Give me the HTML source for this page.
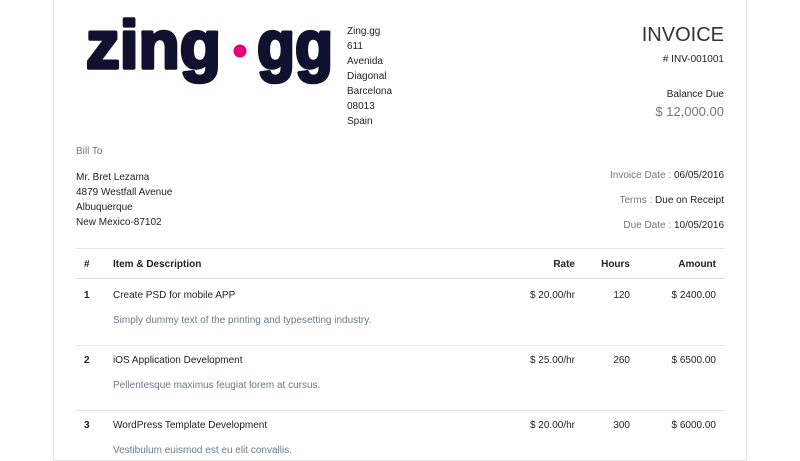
<!DOCTYPE html>
<html><head><style>
body{margin:0;width:800px;height:450px;overflow:hidden;background:#fff;font-family:"Liberation Sans",sans-serif;color:#222;font-size:10px}
.box{position:absolute;left:53px;top:0;width:692px;height:460px;border:1px solid #e3e3e3;border-top:none}
.a{position:absolute;white-space:nowrap}
.g{color:#777}
.r{text-align:right}
.hr{position:absolute;left:76px;width:649px;height:1px;background:#e6e6e6}
b{font-weight:bold}
</style></head><body>
<div class="box"></div>
<svg class="a" style="left:0;top:0" width="345" height="100">
<g font-family="Liberation Sans" font-weight="bold" font-size="68" fill="#10112e" stroke="#10112e" stroke-width="3.5" stroke-linejoin="round">
<text x="86" y="68" textLength="135" lengthAdjust="spacingAndGlyphs">zing</text>
<text x="257" y="68" textLength="76" lengthAdjust="spacingAndGlyphs">gg</text>
</g>
<circle cx="240" cy="51" r="6.5" fill="#e6007e"/>
</svg>
<div class="a" style="left:347px;top:24px;line-height:15px;font-size:10px">Zing.gg<br>611<br>Avenida<br>Diagonal<br>Barcelona<br>08013<br>Spain</div>
<div class="a r" style="right:76px;top:24px;font-size:20px;color:#333">INVOICE</div>
<div class="a r" style="right:76px;top:54px">#&nbsp;INV-001001</div>
<div class="a r" style="right:76px;top:89px">Balance Due</div>
<div class="a r g" style="right:76px;top:104px;font-size:13px">$ 12,000.00</div>
<div class="a g" style="left:76px;top:146px">Bill To</div>
<div class="a" style="left:76px;top:170px;line-height:15px">Mr. Bret Lezama<br>4879 Westfall Avenue<br>Albuquerque<br>New Mexico-87102</div>
<div class="a r" style="right:76px;top:170px"><span class="g">Invoice Date :</span> 06/05/2016</div>
<div class="a r" style="right:76px;top:195px"><span class="g">Terms :</span> Due on Receipt</div>
<div class="a r" style="right:76px;top:220px"><span class="g">Due Date :</span> 10/05/2016</div>
<div class="hr" style="top:248px"></div>
<div class="hr" style="top:278px;background:#ddd"></div>
<div class="a" style="left:84px;top:259px"><b>#</b></div>
<div class="a" style="left:113px;top:259px"><b>Item &amp; Description</b></div>
<div class="a r" style="right:225px;top:259px"><b>Rate</b></div>
<div class="a r" style="right:170px;top:259px"><b>Hours</b></div>
<div class="a r" style="right:84px;top:259px"><b>Amount</b></div>

<div class="a" style="left:84px;top:290px"><b>1</b></div>
<div class="a" style="left:113px;top:290px">Create PSD for mobile APP</div>
<div class="a g" style="left:113px;top:315px;color:#6b7a8c">Simply dummy text of the printing and typesetting industry.</div>
<div class="a r" style="right:225px;top:290px">$ 20.00/hr</div>
<div class="a r" style="right:170px;top:290px">120</div>
<div class="a r" style="right:84px;top:290px">$ 2400.00</div>
<div class="hr" style="top:345px"></div>

<div class="a" style="left:84px;top:355px"><b>2</b></div>
<div class="a" style="left:113px;top:355px">iOS Application Development</div>
<div class="a g" style="left:113px;top:380px;color:#6b7a8c">Pellentesque maximus feugiat lorem at cursus.</div>
<div class="a r" style="right:225px;top:355px">$ 25.00/hr</div>
<div class="a r" style="right:170px;top:355px">260</div>
<div class="a r" style="right:84px;top:355px">$ 6500.00</div>
<div class="hr" style="top:410px"></div>

<div class="a" style="left:84px;top:420px"><b>3</b></div>
<div class="a" style="left:113px;top:420px">WordPress Template Development</div>
<div class="a g" style="left:113px;top:445px;color:#6b7a8c">Vestibulum euismod est eu elit convallis.</div>
<div class="a r" style="right:225px;top:420px">$ 20.00/hr</div>
<div class="a r" style="right:170px;top:420px">300</div>
<div class="a r" style="right:84px;top:420px">$ 6000.00</div>
</body></html>
